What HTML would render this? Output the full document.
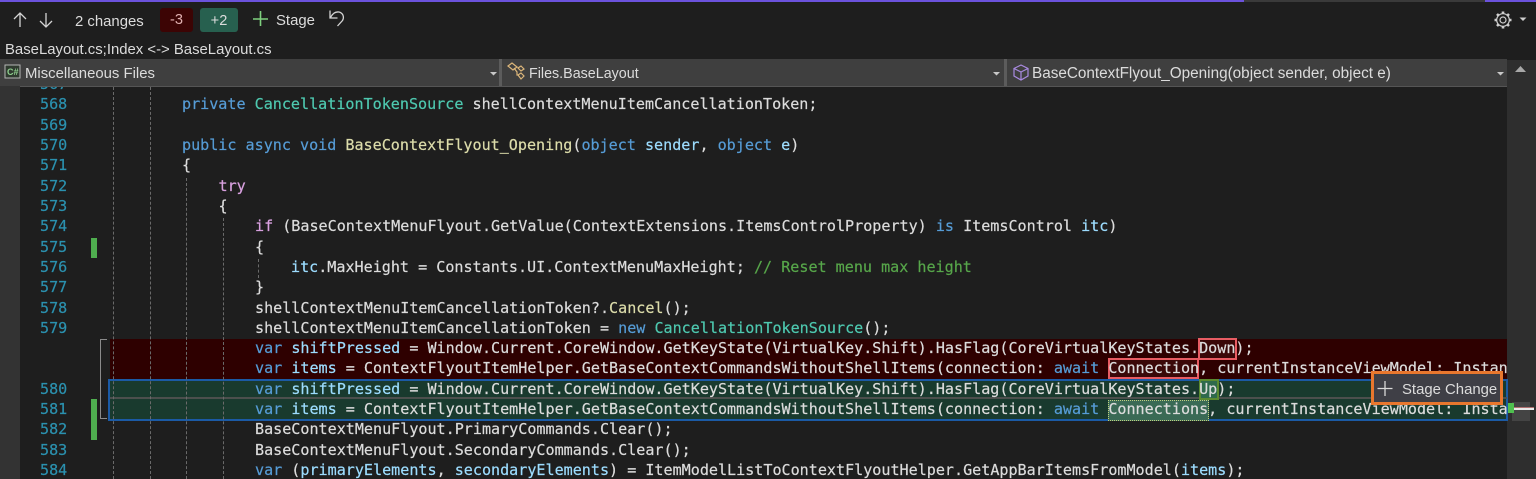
<!DOCTYPE html>
<html><head><meta charset="utf-8"><style>
html,body{margin:0;padding:0;background:#1e1e1e}
#r{position:relative;width:1536px;height:479px;overflow:hidden;background:#1e1e1e;filter:blur(.35px)}
.a{position:absolute}
.u{position:absolute;font-family:"Liberation Sans",sans-serif;font-size:14.9px;color:#dcdcdc;white-space:pre;line-height:20px}
.l,.n{position:absolute;font-family:"DejaVu Sans Mono","Liberation Mono",monospace;font-size:15.09px;line-height:20px;white-space:pre;color:#dcdcdc;-webkit-text-stroke:.2px currentColor}
.n{color:#2b91af;left:40px}
.g{position:absolute;width:0;border-left:1px dashed #6a6a6a}
.k{color:#569cd6}.t{color:#4ec9b0}.v{color:#9cdcfe}.m{color:#dcdcaa}.c{color:#d8a0df}.o{color:#57a64a}
</style></head><body><div id="r">
<div class="a" style="left:0;top:0;width:1536px;height:2px;background:#6b52dc"></div>
<div class="a" style="left:1244px;top:0;width:241px;height:2px;background:#3a3a3a"></div>

<svg class="a" style="left:0;top:0" width="360" height="40" fill="none" stroke="#d4d4d4" stroke-width="1.300">
<path d="M20 27V13M14 19l6-6 6 6M46 13v14M40 21l6 6 6-6"/>
<path d="M253 19h15M260.500 11v15" stroke="#7fd07f" stroke-width="1.600"/>
<path d="M330 10.500v7.500h7.500M330.500 17.500c2-4 5-6 8.500-5.500 4 1 5.500 5 3.500 8.500l-5 5.500"/>
</svg>
<div class="u" style="left:75px;top:12px">2 changes</div>
<div class="a" style="left:160px;top:8px;width:33px;height:24px;background:#3c0404;border-radius:3px;color:#e0b0b0;font:14.6px/25px 'Liberation Sans',sans-serif;text-align:center">-3</div>
<div class="a" style="left:200px;top:8px;width:38px;height:24px;background:#27604f;border-radius:3px;color:#dcdcdc;font:14.6px/26px 'Liberation Sans',sans-serif;text-align:center">+2</div>
<div class="u" style="left:276px;top:11px">Stage</div>
<svg class="a" style="left:1490px;top:7px" width="46" height="26" fill="none" stroke="#cfcfcf" stroke-width="1.200">
<circle cx="13" cy="13" r="3"/>
<circle cx="13" cy="13" r="6.300"/>
<path d="M13 4.500v2.200M13 19.300v2.200M4.500 13h2.200M19.300 13h2.200M7 7l1.500 1.500M17.500 17.500L19 19M7 19l1.500-1.500M17.500 8.500L19 7" stroke-width="2.600"/>
<path d="M29.500 10.500h7l-3.500 3.500z" fill="#cfcfcf" stroke="none"/>
</svg>
<div class="u" style="left:5px;top:40px">BaseLayout.cs;Index &lt;-&gt; BaseLayout.cs</div>

<div class="a" style="left:0;top:59px;width:1507px;height:27px;background:#3f3f3f;border-bottom:1px solid #555"></div>
<div class="a" style="left:499px;top:59px;width:3px;height:27px;background:#5c5c5c"></div>
<div class="a" style="left:1004px;top:59px;width:3px;height:27px;background:#5c5c5c"></div>
<div class="u" style="left:25px;top:64px">Miscellaneous Files</div>
<div class="u" style="left:529px;top:64px;font-size:14.3px">Files.BaseLayout</div>
<div class="u" style="left:1032px;top:64px;font-size:15.3px">BaseContextFlyout_Opening(object sender, object e)</div>

<div class="a" style="left:0;top:86px;width:20px;height:393px;background:#333"></div>
<div class="a" style="left:1507px;top:60px;width:29px;height:419px;background:#2e2e2e"></div>
<svg class="a" style="left:0;top:59px" width="1536" height="27" fill="none">
<rect x="5" y="6" width="15" height="13" stroke="#b5b5b5" fill="#2f3a2f"/>
<text x="7" y="16" font-family="Liberation Sans,sans-serif" font-size="9" font-weight="700" fill="#8fd08f">C#</text>
<path d="M490 13h7l-3.500 3.500zM993 13h7l-3.500 3.500zM1497 13h7l-3.500 3.500z" fill="#c8c8c8"/>
<path d="M508 7l4-3 5 4-4 3zM518 9l3-2 3 3-3 2zM518 16l3-2 3 3-3 3zM514 9l3 4v3l2 0" stroke="#dcb67a" stroke-width="1.200"/>
<path d="M1021 6l7 3.500v7.500L1021 21l-7-4V9.500zM1014 9.500l7 3.500 7-3.500M1021 13v8" stroke="#a98ae0" stroke-width="1.200"/>
<path d="M1515 13h11l-5.500-6z" fill="#a8a8a8"/>
</svg>

<div class="a" style="left:110px;top:339px;width:1397px;height:40px;background:#2e0000"></div>
<div class="a" style="left:108px;top:379px;width:1399px;height:41px;background:#193a2e"></div>
<div class="a" style="left:108px;top:379px;width:1400px;height:42px;box-sizing:border-box;border:2px solid #1b5aa5"></div>
<div class="a" style="left:110px;top:397px;width:1397px;height:2px;background:#4c4f4d"></div>

<div class="g" style="left:113px;top:87px;height:392px"></div>
<div class="g" style="left:150px;top:87px;height:392px"></div>
<div class="g" style="left:186px;top:178px;height:301px"></div>
<div class="g" style="left:223px;top:218px;height:261px"></div>
<div class="g" style="left:258px;top:259px;height:19px"></div>

<div class="a" style="left:91px;top:238px;width:6px;height:20px;background:#4fae4f"></div>
<div class="a" style="left:91px;top:399px;width:6px;height:41px;background:#4fae4f"></div>
<div class="a" style="left:100px;top:339px;width:6px;height:78px;border:1px solid #8a8a8a;border-right:0"></div>

<div class="a" style="left:1198px;top:338px;width:39px;height:22px;border:2px solid #e85c63;box-sizing:border-box;background:#3a0808"></div>
<div class="a" style="left:1108px;top:358px;width:91px;height:21px;border:2px solid #e85c63;box-sizing:border-box;background:#3a0808"></div>
<div class="a" style="left:1199px;top:379px;width:20px;height:21px;border:2px solid #5a8a30;box-sizing:border-box;background:#2e6a4c"></div>
<div class="a" style="left:1108px;top:400px;width:101px;height:21px;border:1px dotted #c0d080;box-sizing:border-box;background:#3a6a55"></div>

<div class="a" style="left:0;top:87px;width:1507px;height:392px;overflow:hidden">
<div class="n" style="top:-13px">567</div>
</div>

<div class="n" style="top:94px">568</div>
<div class="n" style="top:115px">569</div>
<div class="n" style="top:135px">570</div>
<div class="n" style="top:155px">571</div>
<div class="n" style="top:176px">572</div>
<div class="n" style="top:196px">573</div>
<div class="n" style="top:216px">574</div>
<div class="n" style="top:237px">575</div>
<div class="n" style="top:257px">576</div>
<div class="n" style="top:277px">577</div>
<div class="n" style="top:298px">578</div>
<div class="n" style="top:318px">579</div>
<div class="n" style="top:379px">580</div>
<div class="n" style="top:399px">581</div>
<div class="n" style="top:419px">582</div>
<div class="n" style="top:440px">583</div>
<div class="n" style="top:460px">584</div>

<div class="l" style="left:182px;top:94px"><span class="k">private</span> <span class="t">CancellationTokenSource</span> shellContextMenuItemCancellationToken;</div>
<div class="l" style="left:182px;top:135px"><span class="k">public</span> <span class="k">async</span> <span class="k">void</span> <span class="m">BaseContextFlyout_Opening</span>(<span class="k">object</span> <span class="v">sender</span>, <span class="k">object</span> <span class="v">e</span>)</div>
<div class="l" style="left:182px;top:155px">{</div>
<div class="l" style="left:218.500px;top:176px"><span class="c">try</span></div>
<div class="l" style="left:218.500px;top:196px">{</div>
<div class="l" style="left:255px;top:216px"><span class="c">if</span> (BaseContextMenuFlyout.GetValue(ContextExtensions.ItemsControlProperty) <span class="k">is</span> ItemsControl <span class="v">itc</span>)</div>
<div class="l" style="left:255px;top:237px">{</div>
<div class="l" style="left:291px;top:257px"><span class="v">itc</span>.MaxHeight = Constants.UI.ContextMenuMaxHeight; <span class="o">// Reset menu max height</span></div>
<div class="l" style="left:255px;top:277px">}</div>
<div class="l" style="left:255px;top:298px">shellContextMenuItemCancellationToken?.<span class="m">Cancel</span>();</div>
<div class="l" style="left:255px;top:318px">shellContextMenuItemCancellationToken = <span class="k">new</span> <span class="t">CancellationTokenSource</span>();</div>
<div class="l" style="left:255px;top:338px"><span class="k">var</span> <span class="v">shiftPressed</span> = Window.Current.CoreWindow.GetKeyState(VirtualKey.Shift).HasFlag(CoreVirtualKeyStates.Down);</div>
<div class="a" style="left:0;top:358px;width:1507px;height:21px;overflow:hidden"><div class="l" style="left:255px;top:0"><span class="k">var</span> <span class="v">items</span> = ContextFlyoutItemHelper.GetBaseContextCommandsWithoutShellItems(connection: <span class="k">await</span> Connection, currentInstanceViewModel: Instance);</div></div>
<div class="l" style="left:255px;top:379px"><span class="k">var</span> <span class="v">shiftPressed</span> = Window.Current.CoreWindow.GetKeyState(VirtualKey.Shift).HasFlag(CoreVirtualKeyStates.Up);</div>
<div class="a" style="left:0;top:399px;width:1507px;height:21px;overflow:hidden"><div class="l" style="left:255px;top:0"><span class="k">var</span> <span class="v">items</span> = ContextFlyoutItemHelper.GetBaseContextCommandsWithoutShellItems(connection: <span class="k">await</span> Connections, currentInstanceViewModel: Instance);</div></div>
<div class="l" style="left:255px;top:419px">BaseContextMenuFlyout.PrimaryCommands.Clear();</div>
<div class="l" style="left:255px;top:440px">BaseContextMenuFlyout.SecondaryCommands.Clear();</div>
<div class="l" style="left:255px;top:460px"><span class="k">var</span> (<span class="v">primaryElements</span>, <span class="v">secondaryElements</span>) = ItemModelListToContextFlyoutHelper.GetAppBarItemsFromModel(<span class="v">items</span>);</div>

<div class="a" style="left:1371px;top:371px;width:132px;height:34px;box-sizing:border-box;border:3px solid #e8772e;background:#3f3f46"></div>
<svg class="a" style="left:1376px;top:379px" width="20" height="20" fill="none" stroke="#d8d8d8" stroke-width="1.300"><path d="M9 2v15M1.500 9.500h15"/></svg>
<div class="u" style="left:1402px;top:380px">Stage Change</div>

<div class="a" style="left:1512px;top:402px;width:18px;height:19px;background:#444"></div>
<div class="a" style="left:1508px;top:403px;width:6px;height:10px;background:#4fc04f"></div>
<div class="a" style="left:1514px;top:407px;width:20px;height:1px;background:#b07070"></div>
<div class="a" style="left:1514px;top:408px;width:20px;height:2px;background:#e8e8e8"></div>
</div></body></html>
